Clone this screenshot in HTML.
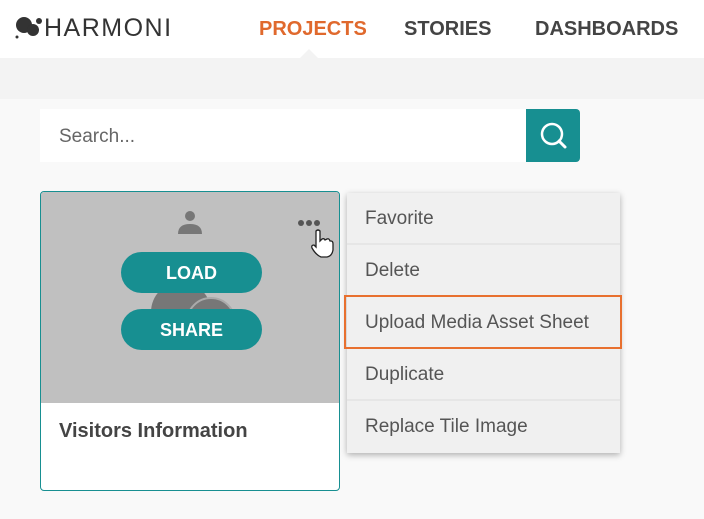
<!DOCTYPE html>
<html><head><style>
*{margin:0;padding:0;box-sizing:border-box}
body{width:704px;height:519px;background:#f9f9f9;font-family:"Liberation Sans",sans-serif;position:relative;overflow:hidden}
.hdr{position:absolute;left:0;top:0;width:704px;height:58px;background:#fff}
.band{position:absolute;left:0;top:58px;width:704px;height:41px;background:#f3f3f3}
.nav{position:absolute;top:18px;font-size:20px;font-weight:bold;color:#444;letter-spacing:0px}
.logo{position:absolute;left:44px;top:14px;font-size:25px;color:#333;letter-spacing:1.5px}
.search{position:absolute;left:40px;top:109px;width:486px;height:53px;background:#fff;font-size:19px;color:#666;padding:17px 19px}
.sbtn{position:absolute;left:526px;top:109px;width:54px;height:53px;background:#178f91;border-radius:0 4px 4px 0}
.card{position:absolute;left:40px;top:191px;width:300px;height:300px;border:1px solid #178f91;border-radius:4px;background:#fff;overflow:hidden}
.img{position:absolute;left:0;top:0;width:298px;height:211px;background:#c0c0c0}
.btn{position:absolute;left:80px;width:141px;height:41px;border-radius:21px;background:#178f91;color:#fff;font-weight:bold;font-size:18px;text-align:center;line-height:43px}
.title{position:absolute;left:18px;top:228px;font-size:20px;font-weight:bold;color:#444}
.menu{position:absolute;left:347px;top:193px;width:273px;height:260px;background:#f0f0f0;box-shadow:0 2px 6px rgba(0,0,0,.3)}
.it{height:52px;border-bottom:2px solid #e6e6e6;font-size:19px;color:#555;padding-left:18px;line-height:52px}
.hl{position:absolute;left:344px;top:295px;width:278px;height:54px;border:2.5px solid #e8702f}
</style></head><body>
<div class="hdr"></div>
<div class="band"></div>
<svg style="position:absolute;left:300px;top:47px" width="18" height="12"><polygon points="0,11 9,2 18,11" fill="#f3f3f3"/></svg>
<svg style="position:absolute;left:14px;top:14px" width="32" height="26"><circle cx="10" cy="11" r="8" fill="#333"/><circle cx="19" cy="16" r="6" fill="#333"/><circle cx="25" cy="7" r="3" fill="#333"/><circle cx="3" cy="23" r="1.5" fill="#333"/></svg>
<div class="logo">HARMONI</div>
<div class="nav" style="left:259px;color:#e0692d">PROJECTS</div>
<div class="nav" style="left:404px">STORIES</div>
<div class="nav" style="left:535px">DASHBOARDS</div>
<div class="search">Search...</div>
<div class="sbtn"><svg width="54" height="53"><circle cx="26" cy="25" r="10" fill="none" stroke="#fff" stroke-width="2.5"/><line x1="33" y1="32" x2="39" y2="38" stroke="#fff" stroke-width="3" stroke-linecap="round"/></svg></div>
<div class="card">
<div class="img">
<svg style="position:absolute;left:100px;top:90px" width="100" height="80"><circle cx="40" cy="30" r="30" fill="#777"/><circle cx="70" cy="40" r="24" fill="#777" stroke="#aaa" stroke-width="2"/></svg>
<svg style="position:absolute;left:136px;top:17px" width="26" height="26"><circle cx="13" cy="7" r="5" fill="#777"/><path d="M1 25 Q1 15 13 15 Q25 15 25 25Z" fill="#777"/></svg>
<svg style="position:absolute;left:255px;top:25px" width="30" height="12"><circle cx="5" cy="6" r="3" fill="#555"/><circle cx="13" cy="6" r="3" fill="#555"/><circle cx="21" cy="6" r="3" fill="#555"/></svg>
<svg style="position:absolute;left:268px;top:36px" width="26" height="32"><path d="M7 3 Q9 1 11 3 L11 13 L13 11 Q15 10 16 12 L18 11 Q20 10 21 13 L22 13 Q24 13 24 16 L24 22 Q23 28 18 29 L12 29 Q7 27 3 20 Q2 17 5 17 L7 19Z" fill="#fff" stroke="#222" stroke-width="1.3"/></svg>
<div class="btn" style="top:60px">LOAD</div>
<div class="btn" style="top:117px">SHARE</div>
</div>
<div class="title">Visitors Information</div>
</div>
<div class="menu">
<div class="it">Favorite</div>
<div class="it">Delete</div>
<div class="it">Upload Media Asset Sheet</div>
<div class="it">Duplicate</div>
<div class="it" style="border:none">Replace Tile Image</div>
</div>
<div class="hl"></div>
</body></html>
